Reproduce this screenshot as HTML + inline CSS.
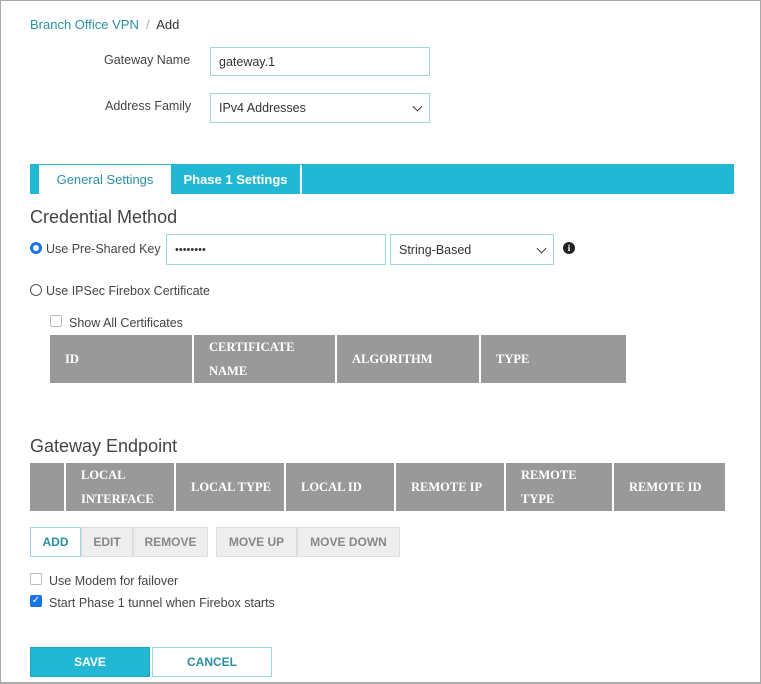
<!DOCTYPE html><html><head><style>
*{box-sizing:border-box;margin:0;padding:0}
body{width:761px;height:684px;background:#fff;font-family:"Liberation Sans",sans-serif;color:#333;position:relative;overflow:hidden}
.frame{position:absolute;left:0;top:0;width:761px;height:684px;border:1px solid #aaa;border-bottom:2px solid #aaa}
.a{position:absolute;white-space:nowrap}
.t{font-size:12.5px;color:#444}
.in{position:absolute;border:1px solid #9fd6de;background:#fff;font-size:12.5px;color:#333;padding-left:8px;display:flex;align-items:center}
.chev{position:absolute;right:8px;top:50%;width:7px;height:7px;border-right:1.5px solid #333;border-bottom:1.5px solid #333;transform:translateY(-70%) rotate(45deg)}
.th{position:absolute;background:#999;color:#fff;font-family:"Liberation Serif",serif;font-weight:bold;font-size:12.5px;display:flex;align-items:center;padding-left:15px;line-height:24px;border-right:2px solid #fff}
.btn{position:absolute;background:#eee;border:1px solid #ddd;color:#888;font-size:12px;font-weight:bold;display:flex;align-items:center;justify-content:center}
.radio{position:absolute;width:12px;height:12px;border-radius:50%;border:1px solid #555;background:#fff}
.cb{position:absolute;width:12px;height:12px;border:1px solid #bbb;border-radius:2px;background:#fff}
</style></head><body>
<div class="frame"></div>
<div class="a" style="left:30px;top:17px;font-size:13px;color:#2a8fa0">Branch Office VPN <span style="color:#aaa">&nbsp;/&nbsp;</span> <span style="color:#333">Add</span></div>
<div class="a t" style="left:104px;top:53px">Gateway Name</div>
<div class="in" style="left:210px;top:47px;width:220px;height:29px">gateway.1</div>
<div class="a t" style="left:105px;top:99px">Address Family</div>
<div class="in" style="left:210px;top:93px;width:220px;height:30px">IPv4 Addresses<span class="chev"></span></div>
<div class="a" style="left:30px;top:164px;width:704px;height:30px;background:#22b8d4"></div>
<div class="a" style="left:39px;top:165px;width:132px;height:29px;background:#fff;color:#2a8fa0;font-size:13px;text-align:center;line-height:29px">General Settings</div>
<div class="a" style="left:171px;top:165px;width:131px;height:29px;color:#fff;font-size:13px;text-align:center;line-height:29px;font-weight:bold;border-right:2px solid #fff">Phase 1 Settings</div>
<div class="a" style="left:30px;top:207px;font-size:18px;color:#444">Credential Method</div>
<div class="radio" style="left:30px;top:242px;border:3.5px solid #1a73e8"></div>
<div class="a t" style="left:46px;top:242px">Use Pre-Shared Key</div>
<div class="in" style="left:166px;top:234px;width:220px;height:31px;font-size:11px">••••••••</div>
<div class="in" style="left:390px;top:234px;width:164px;height:31px">String-Based<span class="chev"></span></div>
<div class="a" style="left:563px;top:242px;width:12px;height:12px;border-radius:50%;background:#222;color:#fff;font-size:9px;font-weight:bold;text-align:center;line-height:12px;font-family:'Liberation Serif',serif">i</div>
<div class="radio" style="left:30px;top:284px"></div>
<div class="a t" style="left:46px;top:284px">Use IPSec Firebox Certificate</div>
<div class="cb" style="left:50px;top:315px"></div>
<div class="a t" style="left:69px;top:316px">Show All Certificates</div>
<div class="th" style="left:50px;top:335px;width:144px;height:48px">ID</div>
<div class="th" style="left:194px;top:335px;width:143px;height:48px">CERTIFICATE<br>NAME</div>
<div class="th" style="left:337px;top:335px;width:144px;height:48px">ALGORITHM</div>
<div class="th" style="left:481px;top:335px;width:145px;height:48px;border-right:none">TYPE</div>
<div class="a" style="left:30px;top:436px;font-size:18px;color:#444">Gateway Endpoint</div>
<div class="th" style="left:30px;top:463px;width:36px;height:48px"></div>
<div class="th" style="left:66px;top:463px;width:110px;height:48px">LOCAL<br>INTERFACE</div>
<div class="th" style="left:176px;top:463px;width:110px;height:48px">LOCAL TYPE</div>
<div class="th" style="left:286px;top:463px;width:110px;height:48px">LOCAL ID</div>
<div class="th" style="left:396px;top:463px;width:110px;height:48px">REMOTE IP</div>
<div class="th" style="left:506px;top:463px;width:108px;height:48px">REMOTE<br>TYPE</div>
<div class="th" style="left:614px;top:463px;width:111px;height:48px;border-right:none">REMOTE ID</div>
<div class="btn" style="left:30px;top:527px;width:51px;height:30px;background:#fff;border-color:#9fd6de;color:#2a8fa0">ADD</div>
<div class="btn" style="left:81px;top:527px;width:52px;height:30px">EDIT</div>
<div class="btn" style="left:133px;top:527px;width:75px;height:30px">REMOVE</div>
<div class="btn" style="left:216px;top:527px;width:81px;height:30px">MOVE UP</div>
<div class="btn" style="left:297px;top:527px;width:103px;height:30px">MOVE DOWN</div>
<div class="cb" style="left:30px;top:573px"></div>
<div class="a t" style="left:49px;top:574px">Use Modem for failover</div>
<div class="cb" style="left:30px;top:595px;background:#1a73e8;border-color:#1a73e8;color:#fff;font-size:10px;line-height:10px;text-align:center">✓</div>
<div class="a t" style="left:49px;top:596px">Start Phase 1 tunnel when Firebox starts</div>
<div class="btn" style="left:30px;top:647px;width:120px;height:30px;background:#22b8d4;border-color:#1fa5bf;color:#fff">SAVE</div>
<div class="btn" style="left:152px;top:647px;width:120px;height:30px;background:#fff;border-color:#9fd6de;color:#2a8fa0">CANCEL</div>
</body></html>
